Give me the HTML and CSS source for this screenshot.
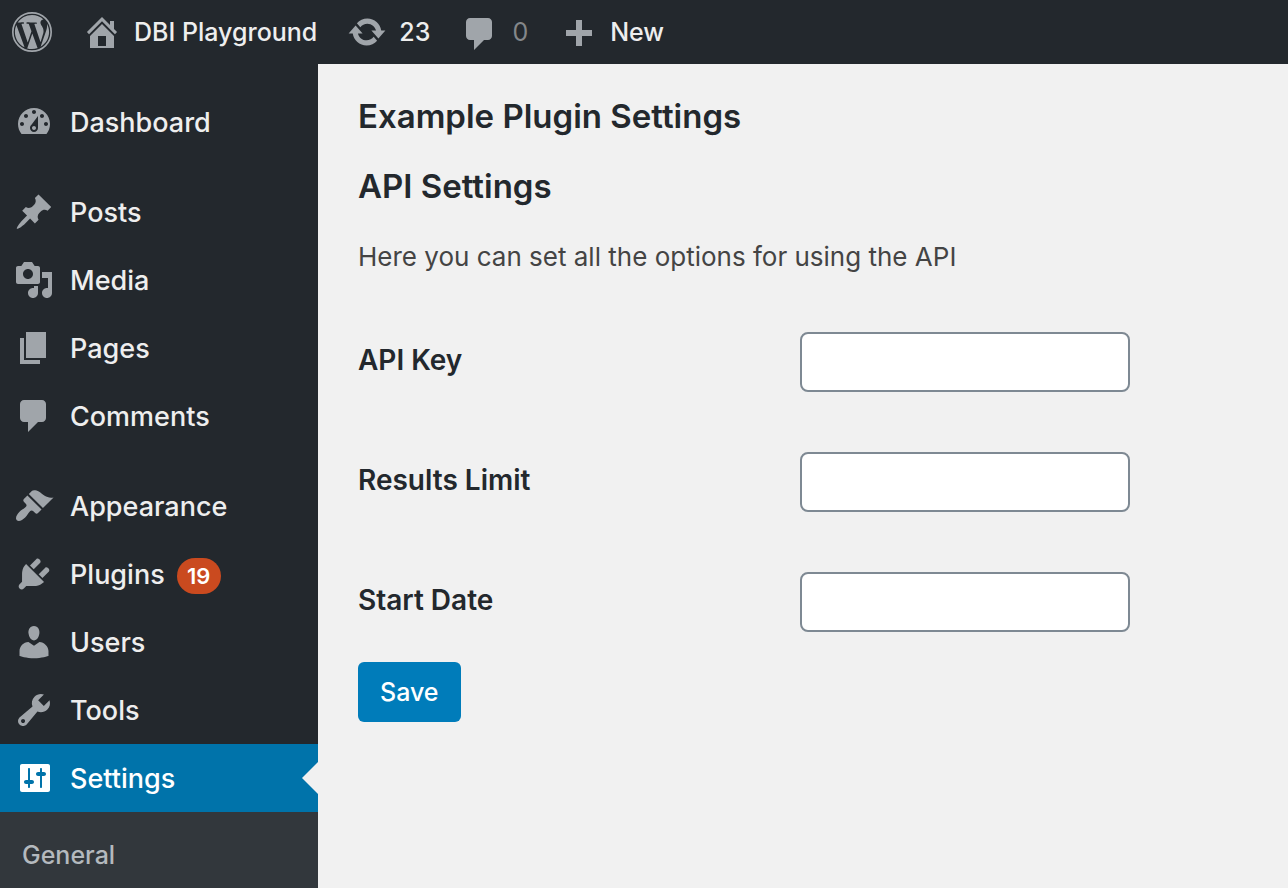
FILE: index.html
```
<!DOCTYPE html>
<html lang="en">

<head>
    <meta charset="UTF-8">
    <meta name="viewport" content="width=device-width, initial-scale=1.0">
    <title>Example Plugin Settings</title>
    <link rel="stylesheet" href="styles.css">
</head>

<body>
    <header class="adminbar">
        <a class="bar-item" href="#" aria-label="About WordPress">
            <svg class="icon" viewBox="0 0 24 24">
                <circle cx="12" cy="12" r="11.5" fill="none" stroke="currentColor" stroke-width="1"/>
                <path transform="translate(12 12) scale(0.95) translate(-12 -12)" d="M21.469 6.825c.84 1.537 1.318 3.3 1.318 5.175 0 3.979-2.156 7.456-5.363 9.325l3.295-9.527c.615-1.54.82-2.771.82-3.864 0-.405-.026-.78-.07-1.11m-7.981.105c.647-.03 1.232-.105 1.232-.105.582-.075.514-.93-.067-.899 0 0-1.755.135-2.88.135-1.064 0-2.85-.15-2.85-.15-.585-.03-.661.855-.075.885 0 0 .54.061 1.125.09l1.68 4.605-2.37 7.08L5.354 6.9c.649-.03 1.234-.1 1.234-.1.585-.075.516-.93-.065-.896 0 0-1.746.138-2.874.138-.2 0-.438-.008-.69-.015C4.911 3.15 8.235 1.215 12 1.215c2.809 0 5.365 1.072 7.286 2.833-.046-.003-.091-.009-.141-.009-1.06 0-1.812.923-1.812 1.914 0 .89.513 1.643 1.06 2.531.411.72.89 1.643.89 2.977 0 .915-.354 1.994-.821 3.479l-1.075 3.585-3.9-11.61zM12 22.784c-1.059 0-2.081-.153-3.048-.437l3.237-9.406 3.315 9.087c.024.053.05.101.078.149-1.12.393-2.325.609-3.582.609M1.211 12c0-1.564.336-3.05.935-4.39L7.29 21.709C3.694 19.96 1.212 16.271 1.211 12"/>
            </svg>
        </a>
        <a class="bar-item" href="#">
            <svg class="icon" viewBox="0 0 20 20"><path d="M16 8.5l1.53 1.53-1.06 1.06L10 4.6l-6.47 6.49-1.06-1.06L10 2.5l4 4v-2h2v4zm-6-2.46l6 5.99V18H4v-5.97zM12 17v-5H8v5h4z"/></svg>
            <span>DBI Playground</span>
        </a>
        <a class="bar-item" href="#">
            <svg class="icon" viewBox="0 0 20 20"><path d="M10.2 3.28c3.53 0 6.43 2.61 6.92 6h2.08l-3.5 4-3.5-4h2.32c-.45-1.97-2.21-3.45-4.32-3.45-1.45 0-2.73.71-3.54 1.78L4.95 5.66C6.23 4.2 8.11 3.28 10.2 3.28zm-.4 13.44c-3.52 0-6.43-2.61-6.92-6H.8l3.5-4c1.17 1.33 2.33 2.67 3.5 4H5.48c.45 1.97 2.21 3.45 4.32 3.45 1.45 0 2.73-.71 3.54-1.78l1.71 1.95c-1.28 1.46-3.15 2.38-5.25 2.38z"/></svg>
            <span>23</span>
        </a>
        <a class="bar-item" href="#">
            <svg class="icon" viewBox="0 0 20 20"><path d="M5 3h9c1.1 0 2 .9 2 2v7c0 1.1-.9 2-2 2h-2l-5 5v-5H5c-1.1 0-2-.9-2-2V5c0-1.1.9-2 2-2z"/></svg>
            <span class="count-zero">0</span>
        </a>
        <a class="bar-item" href="#">
            <svg class="icon" viewBox="0 0 20 20"><path d="M17 9v3h-5v5H9v-5H4V9h5V4h3v5z"/></svg>
            <span>New</span>
        </a>
    </header>

    <div class="wrapper">
        <nav class="menu">
            <ul class="menu-group">
                <li><a class="menu-item" href="#">
                    <svg class="icon" viewBox="0 0 20 20"><path fill-rule="evenodd" d="M3.76 16h12.48c1.1-1.37 1.76-3.11 1.76-5 0-4.42-3.58-8-8-8s-8 3.58-8 8c0 1.89.66 3.63 1.76 5zM10 4c.55 0 1 .45 1 1s-.45 1-1 1-1-.45-1-1 .45-1 1-1zM6 6c.55 0 1 .45 1 1s-.45 1-1 1-1-.45-1-1 .45-1 1-1zm8 0c.55 0 1 .45 1 1s-.45 1-1 1-1-.45-1-1 .45-1 1-1zm-5.37 5.55L12 7v6c0 1.1-.9 2-2 2s-2-.9-2-2c0-.57.24-1.08.63-1.45zM4 10c.55 0 1 .45 1 1s-.45 1-1 1-1-.45-1-1 .45-1 1-1zm12 0c.55 0 1 .45 1 1s-.45 1-1 1-1-.45-1-1 .45-1 1-1zm-5 3c0-.55-.45-1-1-1s-1 .45-1 1 .45 1 1 1 1-.45 1-1z"/></svg>
                    <span>Dashboard</span>
                </a></li>
            </ul>
            <ul class="menu-group">
                <li><a class="menu-item" href="#">
                    <svg class="icon" viewBox="0 0 20 20"><path d="M10.44 3.02l1.82-1.82 6.36 6.35-1.83 1.82c-1.05-.68-2.48-.57-3.41.36l-.75.75c-.92.93-1.04 2.35-.35 3.41l-1.83 1.82-2.41-2.41-2.8 2.79c-.42.42-3.38 2.71-3.8 2.29s1.86-3.39 2.28-3.81l2.79-2.79L4.1 9.36l1.83-1.82c1.05.69 2.48.57 3.4-.36l.75-.75c.93-.92 1.05-2.35.36-3.41z"/></svg>
                    <span>Posts</span>
                </a></li>
                <li><a class="menu-item" href="#">
                    <svg class="icon" viewBox="0 0 20 20"><path fill-rule="evenodd" d="M13 11V4c0-.55-.45-1-1-1h-1.67L9 1H5L3.67 3H2c-.55 0-1 .45-1 1v7c0 .55.45 1 1 1h10c.55 0 1-.45 1-1zM7 4.5c1.38 0 2.5 1.12 2.5 2.5S8.38 9.5 7 9.5 4.5 8.38 4.5 7 5.62 4.5 7 4.5zM14 6h5v10.5c0 1.38-1.12 2.5-2.5 2.5S14 17.88 14 16.5s1.12-2.5 2.5-2.5c.17 0 .34.02.5.05V9h-3V6zm-4 8.05V13h2v3.5c0 1.38-1.12 2.5-2.5 2.5S7 17.88 7 16.5 8.12 14 9.5 14c.17 0 .34.02.5.05z"/></svg>
                    <span>Media</span>
                </a></li>
                <li><a class="menu-item" href="#">
                    <svg class="icon" viewBox="0 0 20 20"><path d="M6 15V2h10v13H6zm-1 1h8v2H3V5h2v11z"/></svg>
                    <span>Pages</span>
                </a></li>
                <li><a class="menu-item" href="#">
                    <svg class="icon" viewBox="0 0 20 20"><path d="M5 2h9c1.1 0 2 .9 2 2v7c0 1.1-.9 2-2 2h-2l-5 5v-5H5c-1.1 0-2-.9-2-2V4c0-1.1.9-2 2-2z"/></svg>
                    <span>Comments</span>
                </a></li>
            </ul>
            <ul class="menu-group">
                <li><a class="menu-item" href="#">
                    <svg class="icon" viewBox="0 0 20 20"><path d="M14.48 11.06L7.41 3.99l1.5-1.5c.5-.56 2.3-.47 3.51.32 1.21.8 1.43 1.28 2.91 2.1 1.18.64 2.45 1.26 4.45.85zm-.71.71L6.7 4.7 4.93 6.47c-.39.39-.39 1.02 0 1.41l1.06 1.06c.39.39.39 1.03 0 1.42-.6.6-1.43 1.11-2.21 1.69-.35.26-.7.53-1.01.84C1.43 14.23.4 16.08 1.4 17.07c.99 1 2.84-.03 4.18-1.36.31-.31.58-.66.85-1.02.57-.78 1.08-1.61 1.69-2.21.39-.39 1.02-.39 1.41 0l1.06 1.06c.39.39 1.02.39 1.41 0z"/></svg>
                    <span>Appearance</span>
                </a></li>
                <li><a class="menu-item" href="#">
                    <svg class="icon" viewBox="0 0 20 20"><path d="M13.11 4.36L9.87 7.6 8 5.73l3.24-3.24c.35-.34 1.05-.2 1.56.32.52.51.66 1.21.31 1.55zm-8 1.77l.91-1.12 9.01 9.01-1.19.84c-.71.71-2.63 1.16-3.82 1.16H6.14L4.9 17.26c-.59.59-1.54.59-2.12 0-.59-.58-.59-1.53 0-2.12l1.24-1.24v-3.88c0-1.13.4-3.19 1.09-3.89zm7.26 3.97l3.24-3.24c.34-.35 1.04-.21 1.55.31.52.51.66 1.21.31 1.55l-3.24 3.25z"/></svg>
                    <span>Plugins</span>
                    <span class="badge">19</span>
                </a></li>
                <li><a class="menu-item" href="#">
                    <svg class="icon" viewBox="0 0 20 20"><path d="M10 9.25c-2.27 0-2.73-3.44-2.73-3.44C7 4.02 7.82 2 9.97 2c2.16 0 2.98 2.02 2.71 3.81 0 0-.41 3.44-2.68 3.44zm0 2.57L12.72 10c2.39 0 4.52 2.33 4.52 4.53v2.49s-3.65 1.13-7.24 1.13c-3.65 0-7.24-1.13-7.24-1.13v-2.49c0-2.25 1.94-4.48 4.47-4.48z"/></svg>
                    <span>Users</span>
                </a></li>
                <li><a class="menu-item" href="#">
                    <svg class="icon" viewBox="0 0 20 20"><path fill-rule="evenodd" d="M16.68 9.77c-1.34 1.34-3.3 1.67-4.95.99l-5.41 6.52c-.99.99-2.59.99-3.58 0s-.99-2.59 0-3.57l6.52-5.42c-.68-1.65-.35-3.61.99-4.95 1.28-1.28 3.12-1.62 4.72-1.06l-2.89 2.89 2.82 2.82 2.86-2.87c.53 1.58.18 3.39-1.08 4.65zM3.81 16.21c.4.39 1.04.39 1.43 0 .4-.4.4-1.04 0-1.43-.39-.4-1.03-.4-1.43 0-.39.39-.39 1.03 0 1.43z"/></svg>
                    <span>Tools</span>
                </a></li>
                <li>
                    <a class="menu-item current" href="#">
                        <svg class="icon" viewBox="0 0 20 20"><path fill-rule="evenodd" d="M18 16V4c0-.55-.45-1-1-1H4c-.55 0-1 .45-1 1v12c0 .55.45 1 1 1h13c.55 0 1-.45 1-1zM8 11h1c.55 0 1 .45 1 1s-.45 1-1 1H8v1.5c0 .28-.22.5-.5.5s-.5-.22-.5-.5V13H6c-.55 0-1-.45-1-1s.45-1 1-1h1V5.5c0-.28.22-.5.5-.5s.5.22.5.5V11zm5-2h-1c-.55 0-1-.45-1-1s.45-1 1-1h1V5.5c0-.28.22-.5.5-.5s.5.22.5.5V7h1c.55 0 1 .45 1 1s-.45 1-1 1h-1v5.5c0 .28-.22.5-.5.5s-.5-.22-.5-.5V9z"/></svg>
                        <span>Settings</span>
                    </a>
                    <ul class="submenu">
                        <li><a href="#">General</a></li>
                    </ul>
                </li>
            </ul>
        </nav>

        <main class="content">
            <h2>Example Plugin Settings</h2>
            <form id="settingsForm">
                <h2>API Settings</h2>
                <p>Here you can set all the options for using the API</p>
                <div class="fields">
                    <div class="field">
                        <label for="apiKey">API Key</label>
                        <input type="text" id="apiKey" name="api_key">
                    </div>
                    <div class="field">
                        <label for="resultsLimit">Results Limit</label>
                        <input type="text" id="resultsLimit" name="results_limit">
                    </div>
                    <div class="field">
                        <label for="startDate">Start Date</label>
                        <input type="text" id="startDate" name="start_date">
                    </div>
                </div>
                <button type="submit">Save</button>
            </form>
        </main>
    </div>
</body>

</html>
```
FILE: styles.css
```
* {
    box-sizing: border-box;
}

body {
    margin: 0;
    min-height: 100vh;
    display: flex;
    flex-direction: column;
    background-color: #f1f1f1;
    color: #444444;
    font-family: Inter, "Liberation Sans", sans-serif;
    font-size: 26px;
}

a {
    color: inherit;
    text-decoration: none;
}

ul {
    list-style: none;
    margin: 0;
    padding: 0;
}

.icon {
    flex: none;
    width: 40px;
    height: 40px;
    fill: currentColor;
    color: #a0a5aa;
}

/* top bar */
.adminbar {
    display: flex;
    gap: 30px;
    height: 64px;
    padding: 0 12px;
    background-color: #23282d;
    color: #eeeeee;
    font-size: 25px;
    font-weight: 500;
}

.bar-item {
    display: flex;
    align-items: center;
    gap: 12px;
}

.count-zero {
    color: #84878a;
    font-weight: 400;
}

.wrapper {
    display: flex;
    flex: 1;
}

/* side menu */
.menu {
    flex: none;
    display: flex;
    flex-direction: column;
    gap: 22px;
    width: 318px;
    padding-top: 24px;
    background-color: #23282d;
    color: #eeeeee;
    font-size: 27px;
    font-weight: 500;
}

.menu-item {
    position: relative;
    display: flex;
    align-items: center;
    height: 68px;
    padding-left: 14px;
}

.menu-item .icon {
    margin-right: 16px;
}

.current,
.current .icon {
    color: #ffffff;
}

.current {
    background-color: #0073aa;
}

/* arrow pointing at the current page */
.current::after {
    content: "";
    position: absolute;
    right: 0;
    top: 18px;
    border: 16px solid transparent;
    border-left-width: 0;
    border-right-color: #f1f1f1;
}

.badge {
    min-width: 44px;
    margin: 4px 0 0 12px;
    padding: 0 10px;
    border-radius: 18px;
    background-color: #ca4a1f;
    color: #ffffff;
    font-size: 22px;
    font-weight: 600;
    line-height: 36px;
    text-align: center;
}

.menu-group:last-child {
    flex: 1;
    display: flex;
    flex-direction: column;
}

.menu-group:last-child > li:last-child {
    flex: 1;
    display: flex;
    flex-direction: column;
}

.submenu {
    flex: 1;
    padding: 14px 22px 0;
    background-color: #32373c;
    color: #b4b9be;
    font-size: 25px;
    line-height: 58px;
}

.submenu a {
    display: block;
}

/* settings page */
.content {
    flex: 1;
    padding: 32px 40px;
}

h2 {
    margin: 0 0 30px;
    color: #23282d;
    font-size: 33px;
    font-weight: 600;
    line-height: 40px;
}

p {
    margin: 0;
    line-height: 42px;
}

.fields {
    padding: 54px 0 30px;
    display: flex;
    flex-direction: column;
    gap: 60px;
}

.field {
    display: flex;
    align-items: center;
}

label {
    width: 442px;
    padding-bottom: 4px;
    color: #23282d;
    font-size: 28px;
    font-weight: 600;
}

input[type="text"] {
    width: 330px;
    height: 60px;
    padding: 0 16px;
    border: 2px solid #7e8993;
    border-radius: 8px;
    background-color: #ffffff;
    color: #32373c;
    font-family: inherit;
    font-size: 28px;
}

button {
    height: 60px;
    padding: 0 22px;
    border: none;
    border-radius: 6px;
    background-color: #007cba;
    color: #ffffff;
    font-family: inherit;
    font-size: 25px;
    font-weight: 500;
    cursor: pointer;
}
```
